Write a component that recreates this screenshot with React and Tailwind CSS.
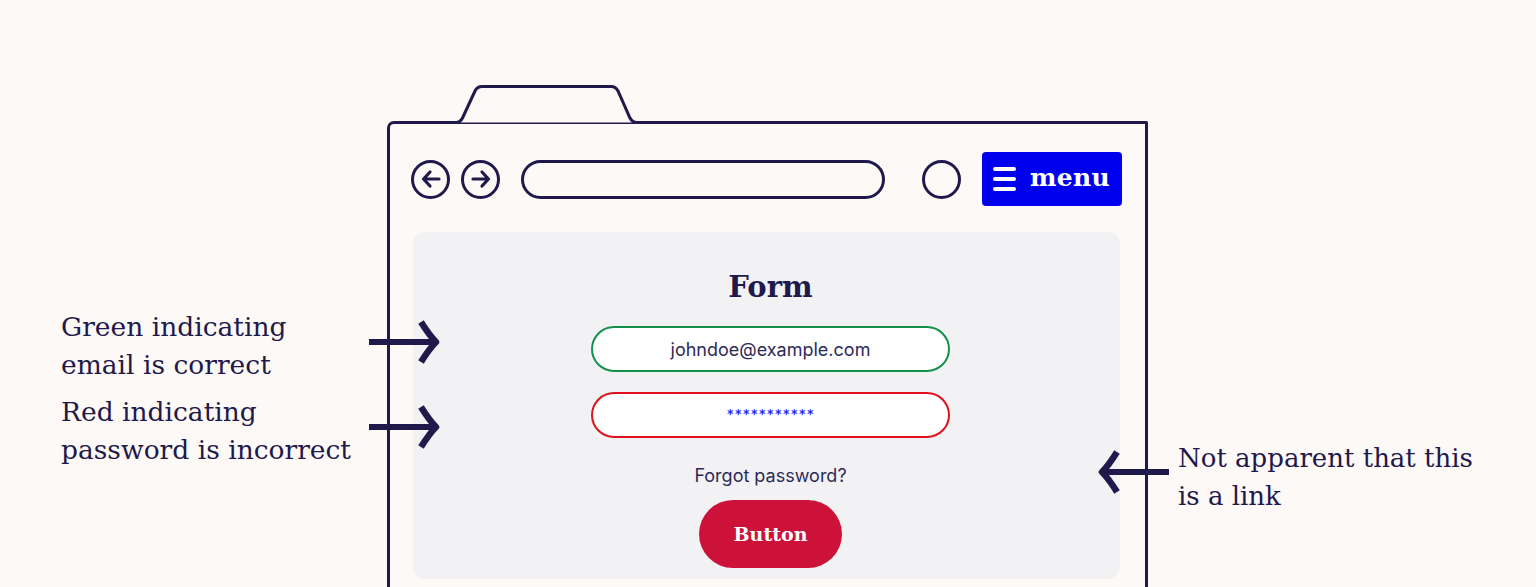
import React from 'react';

const NAVY = '#1f1a4b';

const Arrow = ({ dir = 'right', className }) => (
    <svg className={className} width="76" height="48" viewBox="0 0 76 48" fill="none">
        {dir === 'right' ? (
            <g stroke={NAVY} strokeLinecap="butt">
                <path d="M3 24 H68" strokeWidth="6" />
                <path d="M55 4 C60 12 64 18 70 24 C64 30 60 36 55 44" strokeWidth="6.5" strokeLinejoin="round" />
            </g>
        ) : (
            <g stroke={NAVY} strokeLinecap="butt">
                <path d="M8 24 H73" strokeWidth="6" />
                <path d="M21 4 C16 12 12 18 6 24 C12 30 16 36 21 44" strokeWidth="6.5" strokeLinejoin="round" />
            </g>
        )}
    </svg>
);

const NavCircle = ({ children }) => (
    <div className="size-[39px] rounded-full border-[3px] border-[#1f1a4b] flex items-center justify-center">
        {children}
    </div>
);

const App = () => {
    return (
        <div className="relative w-[1536px] h-[587px] overflow-hidden bg-[#fdf9f6] text-[#1f1a4b]">

            {/* browser frame */}
            <div className="pl-[387px] pt-[121px]">
                <div className="relative w-[761px] h-[520px] border-[3px] border-b-0 border-[#1f1a4b] rounded-tl-[7px] rounded-tr-[2px]">

                    {/* tab */}
                    <svg className="absolute left-[58px] top-[-39px]" width="196" height="42" viewBox="0 0 196 42" fill="none">
                        <path d="M0 37.5 H8 C11 37.5 13 36 14.5 33 L27 6 C28.5 3 30.5 1.5 34 1.5 H163 C166.5 1.5 168.5 3 170 6 L182 33 C183.5 36 185.5 37.5 189 37.5 H196" fill="#fdf9f6" stroke={NAVY} strokeWidth="3" />
                        <rect x="0" y="39" width="196" height="3" fill="#fdf9f6" />
                    </svg>

                    {/* toolbar */}
                    <div className="flex items-center pt-[28px] pl-[21px]">
                        <div className="flex gap-[11px]">
                            <NavCircle>
                                <svg width="24" height="24" viewBox="0 0 24 24" fill="none" stroke={NAVY} strokeWidth="3.2" strokeLinecap="round" strokeLinejoin="round">
                                    <path d="M20 12 H4.5 M11 5 L4.5 12 L11 19" />
                                </svg>
                            </NavCircle>
                            <NavCircle>
                                <svg width="24" height="24" viewBox="0 0 24 24" fill="none" stroke={NAVY} strokeWidth="3.2" strokeLinecap="round" strokeLinejoin="round">
                                    <path d="M4 12 H19.5 M13 5 L19.5 12 L13 19" />
                                </svg>
                            </NavCircle>
                        </div>
                        <div className="ml-[21px] w-[364px] h-[39px] rounded-full border-[3px] border-[#1f1a4b]" />
                        <div className="ml-[37px] size-[39px] rounded-full border-[3px] border-[#1f1a4b]" />
                        <button className="ml-[21px] w-[140px] h-[54px] rounded-[4px] bg-[#0000ee] flex items-center pl-[11px] gap-[14px] text-white">
                            <span className="flex flex-col gap-[6px]">
                                <span className="block w-[23px] h-[4px] rounded-full bg-white" />
                                <span className="block w-[23px] h-[4px] rounded-full bg-white" />
                                <span className="block w-[23px] h-[4px] rounded-full bg-white" />
                            </span>
                            <span className="font-['DejaVu_Serif',serif] font-bold text-[25px] leading-none tracking-[0.3px] -mt-[3px]">menu</span>
                        </button>
                    </div>

                    {/* page content */}
                    <div className="mt-[26px] ml-[23px] pl-[8px] w-[707px] h-[347px] rounded-[12px] bg-[#f2f2f5] flex flex-col items-center">
                        <h2 className="mt-[37px] font-['DejaVu_Serif',serif] font-bold text-[29px] leading-[36px]">Form</h2>
                        <div className="mt-[21px] w-[359px] h-[46px] rounded-full border-[2.5px] border-[#13904a] bg-white flex items-center justify-center font-['Inter',sans-serif] text-[18px] text-[#2d2a58]">
                            johndoe@example.com
                        </div>
                        <div className="mt-[20px] w-[359px] h-[46px] rounded-full border-[2.5px] border-[#e0121c] bg-white flex items-center justify-center font-['Inter',sans-serif] text-[15px] text-[#1a1aff] tracking-[0.5px]">
                            ***********
                        </div>
                        <p className="mt-[26px] font-['Inter',sans-serif] text-[18px] leading-[24px] text-[#2d2a58]">Forgot password?</p>
                        <button className="mt-[12px] w-[143px] h-[68px] rounded-full bg-[#cc1239] text-white font-['DejaVu_Serif',serif] font-bold text-[19px]">
                            Button
                        </button>
                    </div>
                </div>
            </div>

            {/* annotations */}
            <div className="absolute left-[61px] top-[308px] font-['DejaVu_Serif',serif] text-[26.5px] leading-[38px] flex flex-col gap-[9px]">
                <p>Green indicating<br />email is correct</p>
                <p>Red indicating<br />password is incorrect</p>
            </div>
            <Arrow className="absolute left-[366px] top-[318px]" />
            <Arrow className="absolute left-[366px] top-[403px]" />

            <Arrow dir="left" className="absolute left-[1096px] top-[448px]" />
            <p className="absolute left-[1178px] top-[439px] font-['DejaVu_Serif',serif] text-[26px] leading-[38px]">
                Not apparent that this<br />is a link
            </p>
        </div>
    );
};

export default App;
